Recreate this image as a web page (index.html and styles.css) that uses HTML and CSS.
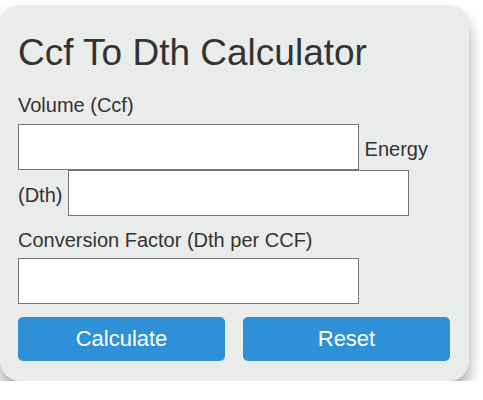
FILE: index.html
```html
<!DOCTYPE html>
<html lang="en">
<head>
    <meta charset="UTF-8">
    <meta name="viewport" content="width=device-width, initial-scale=1.0">
    <title>Ccf To Dth Calculator</title>
    <link rel="stylesheet" href="styles.css">
</head>
<body>

    <div class="calculator">
        <h1>Ccf To Dth Calculator</h1>

        <label class="field-label" for="ccf">Volume (Ccf)</label>
        <div class="flow">
            <input type="number" id="ccf"> <label for="dth">Energy (Dth)</label> <input type="number" id="dth">
        </div>

        <label class="field-label spaced" for="factor">Conversion Factor (Dth per CCF)</label>
        <input type="number" id="factor">

        <div class="actions">
            <button class="btn" onclick="calculate()">Calculate</button>
            <button class="btn" onclick="resetForm()">Reset</button>
        </div>
    </div>

    <script>
        function calculate() {
            const ccf = parseFloat(document.getElementById('ccf').value);
            const dth = parseFloat(document.getElementById('dth').value);
            let factor = parseFloat(document.getElementById('factor').value);

            if (isNaN(factor)) factor = 1.037;

            if (!isNaN(ccf)) {
                document.getElementById('dth').value = (ccf * factor).toFixed(4);
            } else if (!isNaN(dth)) {
                document.getElementById('ccf').value = (dth / factor).toFixed(4);
            }
        }

        function resetForm() {
            document.getElementById('ccf').value = "";
            document.getElementById('dth').value = "";
            document.getElementById('factor').value = "";
        }
    </script>

</body>
</html>
```

FILE: styles.css
```css
/* General Styles */
body {
    font-family: "Liberation Sans", Arial, sans-serif;
    margin: 0;
    background: #fff;
    color: #333;
}

.calculator {
    box-sizing: border-box;
    width: 469px;
    margin-top: 5px;
    padding: 18px 19px 20px 18px;
    background: #eaebeb;
    border-radius: 20px;
    box-shadow: 0 10px 15px rgba(0, 0, 0, 0.35);
    font-size: 20px;
}

h1 {
    font-size: 37px;
    font-weight: normal;
    margin: 9px 0 20px;
}

.field-label {
    display: block;
    margin-bottom: 7px;
}

.field-label.spaced {
    margin-top: 13px;
    margin-bottom: 6px;
}

input[type="number"] {
    box-sizing: border-box;
    width: 341px;
    height: 46px;
    padding: 12px 10px 8px;
    margin: 0;
    border: 1px solid #767676;
    background: #fff;
    font: inherit;
    -moz-appearance: textfield;
}

input::-webkit-outer-spin-button,
input::-webkit-inner-spin-button {
    -webkit-appearance: none;
    margin: 0;
}

/* Buttons */
.actions {
    display: flex;
    justify-content: space-between;
    margin-top: 13px;
}

.btn {
    width: 207px;
    height: 44px;
    border: none;
    border-radius: 5px;
    background: #2e91d8;
    color: #fff;
    font-family: inherit;
    font-size: 22px;
    cursor: pointer;
}

.btn:hover {
    background: #2479b8;
}
```
